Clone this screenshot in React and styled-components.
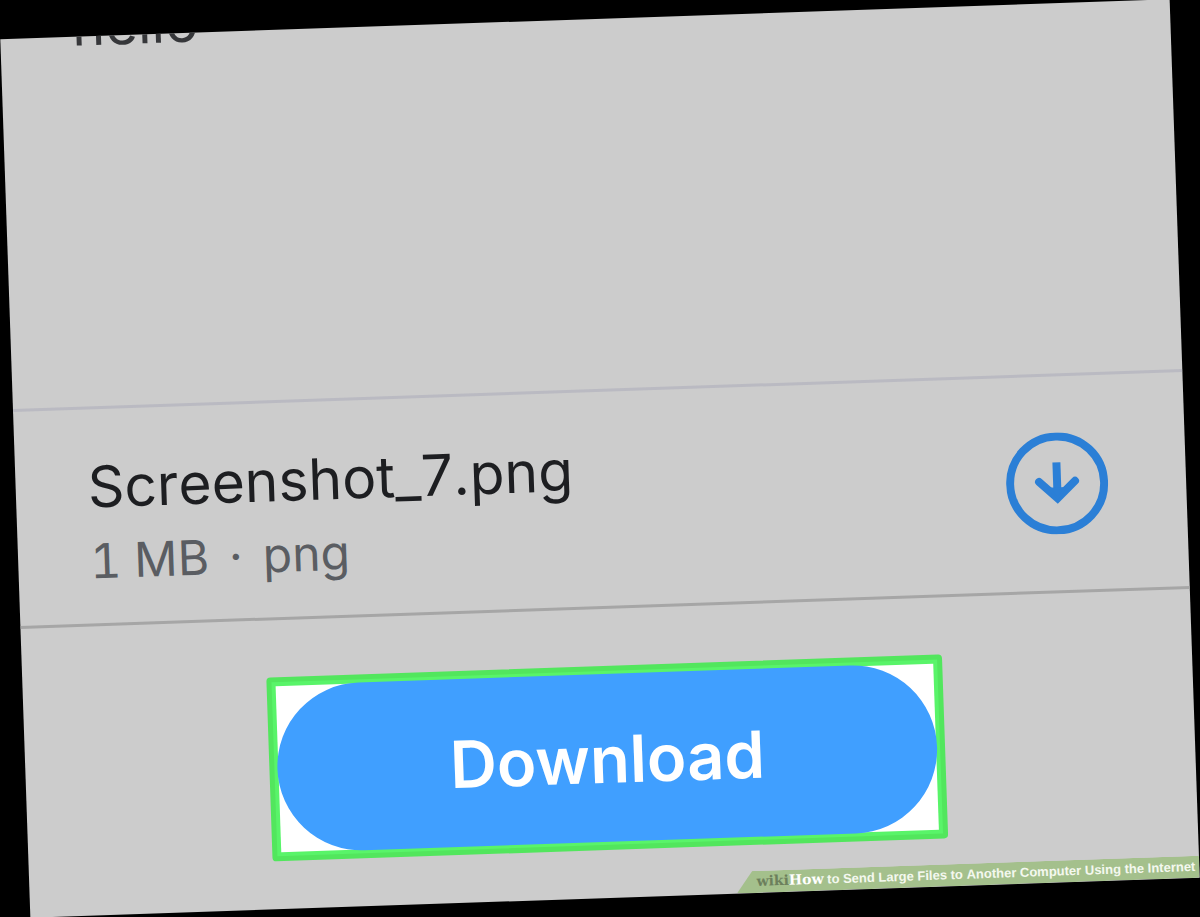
import React from 'react';
import styled, { createGlobalStyle } from 'styled-components';

const GlobalStyle = createGlobalStyle`
  body {
    margin: 0;
    background-color: #000;
  }
`;

const Stage = styled.div`
  display: flex;
  align-items: center;
  justify-content: center;
  min-height: 100vh;
  overflow: hidden;
  background-color: #000;
`;

const Sheet = styled.main`
  display: flex;
  flex-direction: column;
  box-sizing: border-box;
  width: 97.5%;
  overflow: hidden;
  background-color: #ccc;
  font-family: Inter, 'Liberation Sans', sans-serif;
  font-kerning: none;
  transform: rotate(-1.96deg);
`;

const MessageArea = styled.section`
  box-sizing: border-box;
  min-height: 370px;
  padding: 0 72px;
`;

// The message is scrolled almost out of view
const Message = styled.p`
  margin: -47px 0 0;
  color: #36373a;
  font-size: 56px;
  line-height: 72px;
`;

const FileRow = styled.section`
  display: flex;
  align-items: center;
  justify-content: space-between;
  padding: 36px 78px 36px 72px;
  border-top: 3px solid #babac2;
  border-bottom: 3px solid #a6a6a6;
`;

const Details = styled.div`
  display: flex;
  flex-direction: column;
  gap: 14px;
  padding-top: 8px;
`;

const FileName = styled.h1`
  margin: 0;
  color: #1d1e21;
  font-size: 57px;
  font-weight: 400;
  line-height: 68px;
`;

const Meta = styled.p`
  display: flex;
  gap: 20px;
  margin: 0;
  color: #5a5d62;
  font-size: 48px;
  font-variant-numeric: tabular-nums;
  line-height: 52px;
`;

const IconButton = styled.button`
  display: flex;
  padding: 0;
  border: none;
  background: none;
  color: #2b7fd6;
  cursor: pointer;
`;

const Actions = styled.section`
  display: flex;
  justify-content: center;
  padding: 57px 6px 26px 0;
`;

const Highlight = styled.div`
  box-sizing: border-box;
  width: 58%;
  padding: 4px;
  border: 5px solid #52e65d;
  border-radius: 4px;
  background-color: #59f469;
`;

const Backdrop = styled.div`
  display: flex;
  background-color: #fff;
`;

const DownloadButton = styled.button`
  flex: 1;
  height: 168px;
  margin: -1px;
  padding: 4px 0 0;
  border: none;
  border-radius: 84px;
  background-color: #409fff;
  color: #fff;
  font-family: Inter, 'Liberation Sans', sans-serif;
  font-size: 65px;
  font-weight: 600;
  line-height: 72px;
  cursor: pointer;
`;

const Caption = styled.footer`
  align-self: flex-end;
  box-sizing: border-box;
  padding: 0 4px 0 20px;
  background-color: #a4c08c;
  clip-path: polygon(16px 0, 100% 0, 100% 100%, 0 100%);
  color: #f4f8ef;
  font-family: 'Liberation Sans', Arial, sans-serif;
  font-size: 13px;
  font-weight: 700;
  line-height: 22px;
  white-space: nowrap;
`;

const Brand = styled.span`
  color: ${(props) => (props.$dark ? '#6c7f5c' : '#fff')};
  font-family: 'DejaVu Serif', serif;
  font-size: 14px;
  line-height: 20px;
`;

const DownloadIcon = () => (
  <svg width="102" height="102" viewBox="0 0 102 102" fill="none" stroke="currentColor" aria-hidden="true">
    <circle cx="51" cy="51" r="47" strokeWidth="8" />
    <path d="M51 30V64" strokeWidth="8" />
    <path d="M33 49L51 66L69 49" strokeWidth="8" strokeLinecap="round" />
    <path d="M43 56L51 66L59 56Z" fill="currentColor" strokeWidth="2" />
  </svg>
);

const App = () => {
  return (
    <>
      <GlobalStyle />
      <Stage>
        <Sheet>
          <MessageArea>
            <Message>hello</Message>
          </MessageArea>

          <FileRow>
            <Details>
              <FileName>Screenshot_7.png</FileName>
              <Meta>
                <span>1 MB</span>
                <span>·</span>
                <span>png</span>
              </Meta>
            </Details>
            <IconButton type="button" aria-label="Download Screenshot_7.png">
              <DownloadIcon />
            </IconButton>
          </FileRow>

          <Actions>
            <Highlight>
              <Backdrop>
                <DownloadButton type="button">Download</DownloadButton>
              </Backdrop>
            </Highlight>
          </Actions>

          <Caption>
            <Brand $dark>wiki</Brand>
            <Brand>How</Brand> to Send Large Files to Another Computer Using the Internet
          </Caption>
        </Sheet>
      </Stage>
    </>
  );
};

export default App;
